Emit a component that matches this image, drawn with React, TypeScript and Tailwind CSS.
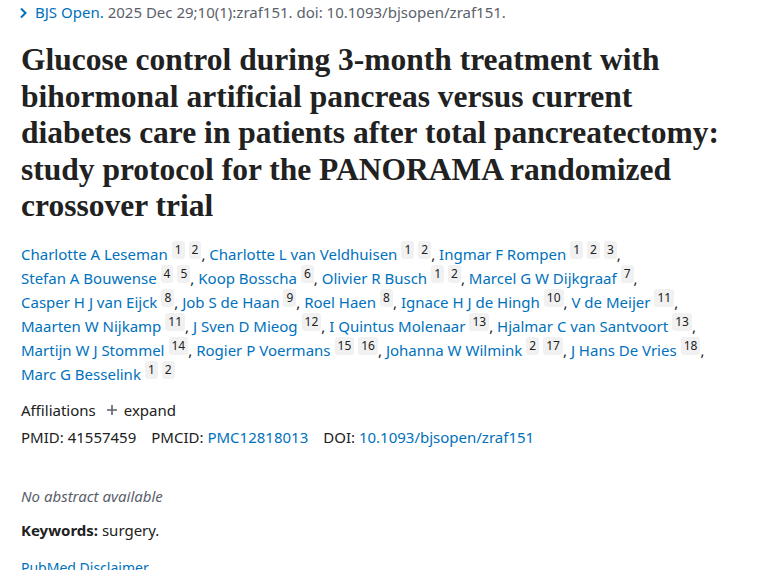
import React from 'react';

type Author = { name: string; refs: string[] };

const authorRows: Author[][] = [
  [
    { name: 'Charlotte A Leseman', refs: ['1', '2'] },
    { name: 'Charlotte L van Veldhuisen', refs: ['1', '2'] },
    { name: 'Ingmar F Rompen', refs: ['1', '2', '3'] },
  ],
  [
    { name: 'Stefan A Bouwense', refs: ['4', '5'] },
    { name: 'Koop Bosscha', refs: ['6'] },
    { name: 'Olivier R Busch', refs: ['1', '2'] },
    { name: 'Marcel G W Dijkgraaf', refs: ['7'] },
  ],
  [
    { name: 'Casper H J van Eijck', refs: ['8'] },
    { name: 'Job S de Haan', refs: ['9'] },
    { name: 'Roel Haen', refs: ['8'] },
    { name: 'Ignace H J de Hingh', refs: ['10'] },
    { name: 'V de Meijer', refs: ['11'] },
  ],
  [
    { name: 'Maarten W Nijkamp', refs: ['11'] },
    { name: 'J Sven D Mieog', refs: ['12'] },
    { name: 'I Quintus Molenaar', refs: ['13'] },
    { name: 'Hjalmar C van Santvoort', refs: ['13'] },
  ],
  [
    { name: 'Martijn W J Stommel', refs: ['14'] },
    { name: 'Rogier P Voermans', refs: ['15', '16'] },
    { name: 'Johanna W Wilmink', refs: ['2', '17'] },
    { name: 'J Hans De Vries', refs: ['18'] },
  ],
  [{ name: 'Marc G Besselink', refs: ['1', '2'] }],
];

const titleLines = [
  'Glucose control during 3-month treatment with',
  'bihormonal artificial pancreas versus current',
  'diabetes care in patients after total pancreatectomy:',
  'study protocol for the PANORAMA randomized',
  'crossover trial',
];

function Ref({ n }: { n: string }) {
  return (
    <span className="relative -top-[6px] ml-[4px] inline-block rounded-[3px] bg-[#f1f1f1] px-[3px] text-[12px] leading-[18px] text-[#212121]">
      {n}
    </span>
  );
}

export default function App() {
  const total = authorRows.length;
  return (
    <div
      className="h-[570px] w-[760px] overflow-hidden bg-white pl-[21px] text-[#212121]"
      style={{ fontFamily: '"Segoe UI", "Noto Sans", sans-serif' }}
    >
      <div className="flex h-[25px] items-center text-[15px]">
        <svg width="10" height="12" viewBox="0 0 10 12" className="mr-[7px] -ml-[3px]">
          <path d="M3 1.5 L7.5 6 L3 10.5" fill="none" stroke="#0071bc" strokeWidth="2" />
        </svg>
        <span className="text-[#0071bc]">BJS Open.</span>
        <span className="ml-[4px] text-[#5b616b]">2025 Dec 29;10(1):zraf151. doi: 10.1093/bjsopen/zraf151.</span>
      </div>

      <h1
        className="mt-[17px] whitespace-nowrap text-[31.5px] font-bold leading-[36.5px] text-[#212121]"
        style={{ fontFamily: '"Liberation Serif", serif' }}
      >
        {titleLines.map((l) => (
          <div key={l}>{l}</div>
        ))}
      </h1>

      <div className="mt-[17px] text-[15px] leading-[24px]">
        {authorRows.map((row, ri) => (
          <div key={ri}>
            {row.map((a, ai) => (
              <React.Fragment key={a.name}>
                <a className="text-[#0071bc]">{a.name}</a>
                {a.refs.map((r) => (
                  <Ref key={r} n={r} />
                ))}
                {!(ri === total - 1 && ai === row.length - 1) && <span>, </span>}
              </React.Fragment>
            ))}
          </div>
        ))}
      </div>

      <div className="mt-[12px] flex items-center text-[15px] leading-[24px]">
        <span>Affiliations</span>
        <span className="ml-[10px] flex items-center">
          <svg width="12" height="12" viewBox="0 0 12 12" className="mr-[6px]">
            <path d="M6 1 V11 M1 6 H11" stroke="#5b616b" strokeWidth="1.6" />
          </svg>
          expand
        </span>
      </div>

      <div className="mt-[3px] flex gap-[15px] text-[15px] leading-[24px]">
        <span>PMID: 41557459</span>
        <span>
          PMCID: <a className="text-[#0071bc]">PMC12818013</a>
        </span>
        <span>
          DOI: <a className="text-[#0071bc]">10.1093/bjsopen/zraf151</a>
        </span>
      </div>

      <div className="mt-[35px] text-[15px] italic leading-[24px] text-[#5b616b]">No abstract available</div>

      <div className="mt-[10px] text-[15px] leading-[24px]">
        <span className="font-bold">Keywords:</span> surgery.
      </div>

      <div className="mt-[14px] text-[14px] leading-[24px] text-[#0071bc]">PubMed Disclaimer</div>
    </div>
  );
}
